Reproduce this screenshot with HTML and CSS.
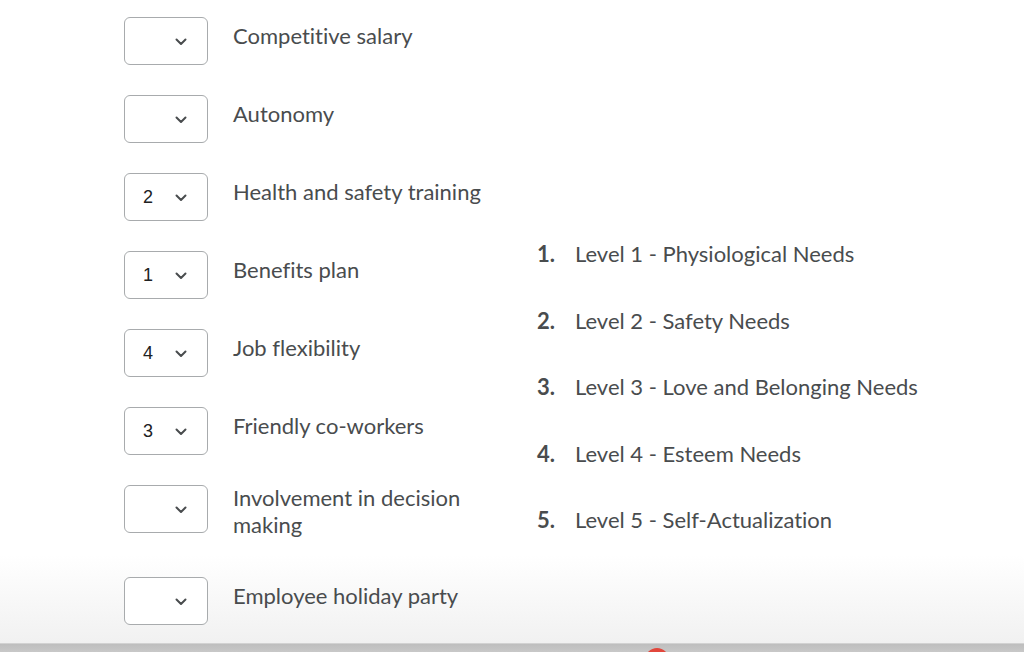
FILE: index.html
```html
<!DOCTYPE html>
<html lang="en">
<head>
<meta charset="utf-8">
<title>Matching</title>
<link rel="stylesheet" href="styles.css">
</head>
<body>
<main class="page">
  <section class="matches">
    <div class="row">
      <div class="select"><span class="value"></span><svg class="chev" viewBox="0 0 12 8" width="12" height="8"><path d="M1.5 1.5 L6 6 L10.5 1.5" /></svg></div>
      <div class="label">Competitive salary</div>
    </div>
    <div class="row">
      <div class="select"><span class="value"></span><svg class="chev" viewBox="0 0 12 8" width="12" height="8"><path d="M1.5 1.5 L6 6 L10.5 1.5" /></svg></div>
      <div class="label">Autonomy</div>
    </div>
    <div class="row">
      <div class="select"><span class="value">2</span><svg class="chev" viewBox="0 0 12 8" width="12" height="8"><path d="M1.5 1.5 L6 6 L10.5 1.5" /></svg></div>
      <div class="label">Health and safety training</div>
    </div>
    <div class="row">
      <div class="select"><span class="value">1</span><svg class="chev" viewBox="0 0 12 8" width="12" height="8"><path d="M1.5 1.5 L6 6 L10.5 1.5" /></svg></div>
      <div class="label">Benefits plan</div>
    </div>
    <div class="row">
      <div class="select"><span class="value">4</span><svg class="chev" viewBox="0 0 12 8" width="12" height="8"><path d="M1.5 1.5 L6 6 L10.5 1.5" /></svg></div>
      <div class="label">Job flexibility</div>
    </div>
    <div class="row">
      <div class="select"><span class="value">3</span><svg class="chev" viewBox="0 0 12 8" width="12" height="8"><path d="M1.5 1.5 L6 6 L10.5 1.5" /></svg></div>
      <div class="label">Friendly co-workers</div>
    </div>
    <div class="row">
      <div class="select"><span class="value"></span><svg class="chev" viewBox="0 0 12 8" width="12" height="8"><path d="M1.5 1.5 L6 6 L10.5 1.5" /></svg></div>
      <div class="label label-multi">Involvement in decision<br>making</div>
    </div>
    <div class="row">
      <div class="select"><span class="value"></span><svg class="chev" viewBox="0 0 12 8" width="12" height="8"><path d="M1.5 1.5 L6 6 L10.5 1.5" /></svg></div>
      <div class="label">Employee holiday party</div>
    </div>
  </section>
  <ol class="levels">
    <li><span class="num">1.</span><span>Level 1 - Physiological Needs</span></li>
    <li><span class="num">2.</span><span>Level 2 - Safety Needs</span></li>
    <li><span class="num">3.</span><span>Level 3 - Love and Belonging Needs</span></li>
    <li><span class="num">4.</span><span>Level 4 - Esteem Needs</span></li>
    <li><span class="num">5.</span><span>Level 5 - Self-Actualization</span></li>
  </ol>
</main>
<footer class="bottombar"><span class="dot"></span></footer>
</body>
</html>
```

FILE: styles.css
```css
html, body {
  margin: 0;
  padding: 0;
}
body {
  width: 1024px;
  height: 652px;
  overflow: hidden;
  font-family: Lato, "Noto Sans", sans-serif;
  font-variant-ligatures: none;
  color: #494c4e;
  background: linear-gradient(to bottom, #ffffff 0, #ffffff 555px, #f1f1f1 643px);
  position: relative;
}
.page {
  display: flex;
  padding: 17px 0 0 124px;
}
.matches {
  display: flex;
  flex-direction: column;
  gap: 30px;
  width: 413px;
}
.row {
  display: flex;
  align-items: flex-start;
}
.select {
  box-sizing: border-box;
  width: 84px;
  height: 48px;
  border: 1px solid #a8abad;
  border-radius: 6px;
  background: #fff;
  display: flex;
  align-items: center;
  flex-shrink: 0;
}
.value {
  width: 46px;
  text-align: center;
  font-family: "Liberation Sans", Arial, sans-serif;
  font-size: 18px;
  color: #202122;
  padding-top: 1px;
}
.chev {
  margin-left: 4px;
  margin-top: 1px;
}
.chev path {
  fill: none;
  stroke: #494c4e;
  stroke-width: 2;
  stroke-linecap: round;
  stroke-linejoin: round;
}
.label {
  margin-left: 25px;
  padding-top: 5px;
  padding-bottom: 9px;
  font-size: 22px;
  line-height: 27px;
}
.label-multi {
  padding-top: 0;
  margin-top: -1px;
  padding-bottom: 9px;
}
.levels {
  list-style: none;
  margin: 0;
  padding: 223px 0 0 0;
  display: flex;
  flex-direction: column;
  gap: 39.5px;
}
.levels li {
  display: flex;
  font-size: 22px;
  line-height: 27px;
}
.levels .num {
  font-weight: 700;
  width: 38px;
}
.bottombar {
  position: absolute;
  left: 0;
  right: 0;
  top: 643px;
  height: 9px;
  background: linear-gradient(to bottom, #bdbdbd, #c8c8c8);
  box-shadow: inset 0 1px 0 #d2d2d2;
  overflow: hidden;
}
.dot {
  position: absolute;
  left: 645px;
  top: 5px;
  width: 24px;
  height: 24px;
  border-radius: 50%;
  background: #e2473c;
}
```
